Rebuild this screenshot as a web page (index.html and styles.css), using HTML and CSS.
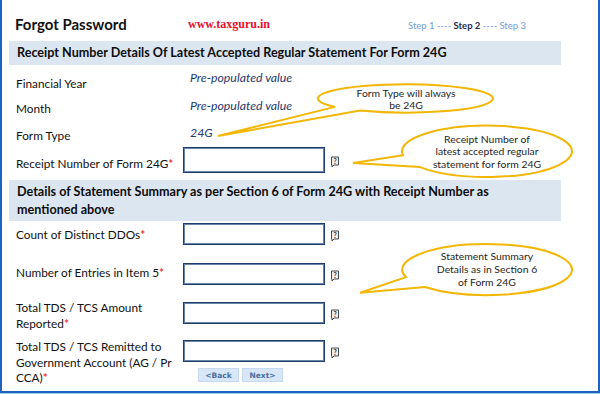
FILE: index.html
```html
<!DOCTYPE html>
<html lang="en">

<head>
    <meta charset="UTF-8">
    <meta name="viewport" content="width=device-width, initial-scale=1.0">
    <title>Forgot Password</title>
    <link rel="stylesheet" href="styles.css">
</head>

<body>

    <div class="page">
        <div class="top">
            <h1 class="title">Forgot Password</h1>
            <span class="site">www.taxguru.in</span>
            <div class="steps"><span>Step 1</span> ---- <b>Step 2</b> ---- <span>Step 3</span></div>
        </div>

        <div class="section">Receipt Number Details Of Latest Accepted Regular Statement For Form 24G</div>

        <div class="row row-fy">
            <div class="label">Financial Year</div>
            <div class="value">Pre-populated value</div>
        </div>
        <div class="row row-month">
            <div class="label">Month</div>
            <div class="value">Pre-populated value</div>
        </div>
        <div class="row row-type">
            <div class="label">Form Type</div>
            <div class="value">24G</div>
        </div>
        <div class="row row-receipt">
            <div class="label">Receipt Number of Form 24G<span class="req">*</span></div>
            <div class="control">
                <input class="field field-tall" type="text">
                <span class="help"><svg width="10" height="12" viewBox="0 0 10 12"><path d="M1.5 1h7v8h-4.5l-2 2v-2h-0.5z" fill="#eeeeee" stroke="#4a4a4a" stroke-width="1"/><text x="5" y="7.6" text-anchor="middle" font-size="7" font-weight="700" fill="#333">?</text></svg></span>
            </div>
        </div>

        <div class="section section-two">Details of Statement Summary as per Section 6 of Form 24G with Receipt Number as mentioned above</div>

        <div class="row row-count">
            <div class="label">Count of Distinct DDOs<span class="req">*</span></div>
            <div class="control">
                <input class="field" type="text">
                <span class="help"><svg width="10" height="12" viewBox="0 0 10 12"><path d="M1.5 1h7v8h-4.5l-2 2v-2h-0.5z" fill="#eeeeee" stroke="#4a4a4a" stroke-width="1"/><text x="5" y="7.6" text-anchor="middle" font-size="7" font-weight="700" fill="#333">?</text></svg></span>
            </div>
        </div>
        <div class="row row-entries">
            <div class="label">Number of Entries in Item 5<span class="req">*</span></div>
            <div class="control">
                <input class="field" type="text">
                <span class="help"><svg width="10" height="12" viewBox="0 0 10 12"><path d="M1.5 1h7v8h-4.5l-2 2v-2h-0.5z" fill="#eeeeee" stroke="#4a4a4a" stroke-width="1"/><text x="5" y="7.6" text-anchor="middle" font-size="7" font-weight="700" fill="#333">?</text></svg></span>
            </div>
        </div>
        <div class="row row-amount">
            <div class="label">Total TDS / TCS Amount<br>Reported<span class="req">*</span></div>
            <div class="control">
                <input class="field" type="text">
                <span class="help"><svg width="10" height="12" viewBox="0 0 10 12"><path d="M1.5 1h7v8h-4.5l-2 2v-2h-0.5z" fill="#eeeeee" stroke="#4a4a4a" stroke-width="1"/><text x="5" y="7.6" text-anchor="middle" font-size="7" font-weight="700" fill="#333">?</text></svg></span>
            </div>
        </div>
        <div class="row row-remitted">
            <div class="label">Total TDS / TCS Remitted to<br>Government Account (AG / Pr<br>CCA)<span class="req">*</span></div>
            <div>
                <div class="control">
                    <input class="field" type="text">
                    <span class="help"><svg width="10" height="12" viewBox="0 0 10 12"><path d="M1.5 1h7v8h-4.5l-2 2v-2h-0.5z" fill="#eeeeee" stroke="#4a4a4a" stroke-width="1"/><text x="5" y="7.6" text-anchor="middle" font-size="7" font-weight="700" fill="#333">?</text></svg></span>
                </div>
                <div class="nav">
                    <button class="btn" type="button">&lt;Back</button>
                    <button class="btn" type="button">Next&gt;</button>
                </div>
            </div>
        </div>
    </div>

    <!-- annotation bubbles drawn over the form -->
    <svg class="callouts" width="600" height="394" viewBox="0 0 600 394">
        <path d="M335 106.9 A87.5 14.2 0 1 1 360 110.6 L218 136 Z" />
        <text x="406" y="96.8">Form Type will always</text>
        <text x="406" y="109.2">be 24G</text>

        <path d="M403 155.2 A85 25.7 0 1 1 420 167.1 L353 163 Z" />
        <text x="487" y="142.5">Receipt Number of</text>
        <text x="487" y="155.2">latest accepted regular</text>
        <text x="487" y="167.8">statement for form 24G</text>

        <path d="M406 277.2 A85 25.5 0 1 1 425 287 L360 292.7 Z" />
        <text x="487" y="260.2">Statement Summary</text>
        <text x="487" y="272.8">Details as in Section 6</text>
        <text x="487" y="286.2">of Form 24G</text>
    </svg>

</body>

</html>
```

FILE: styles.css
```css
body {
    margin: 0;
    width: 600px;
    height: 394px;
    position: relative;
    overflow: hidden;
    background: white;
    font-family: Lato, 'Open Sans', sans-serif;
    color: #111;
}

.page {
    height: 393px;
    box-sizing: border-box;
    padding-left: 7px;
    border: 2px solid #1d63c1;
    border-top: none;
    box-shadow: 0 1px 0 #a9cbef;
}

.top {
    display: flex;
    align-items: center;
    height: 41px;
    box-sizing: border-box;
    padding-top: 7px;
}

.title {
    margin: 0 0 0 6px;
    width: 173px;
    font-size: 15px;
    font-weight: 700;
    color: #111;
}

.site {
    width: 220px;
    font-family: 'Liberation Serif', serif;
    font-weight: 700;
    font-size: 12px;
    color: #e8102c;
}

.steps {
    margin-top: 2px;
    font-size: 9.5px;
    color: #6f9ddc;
}

.steps b {
    color: #1d2b4f;
}

.section {
    width: 552px;
    box-sizing: border-box;
    padding-left: 8px;
    background: #dce6f1;
    font-size: 12.6px;
    font-weight: 700;
    line-height: 24px;
    color: #0d0d0d;
}

.section-two {
    padding-top: 3px;
    padding-bottom: 2px;
    padding-right: 60px;
    line-height: 18px;
}

.row {
    display: flex;
    padding-left: 7px;
    box-sizing: border-box;
}

.label {
    width: 167px;
    flex-shrink: 0;
    font-size: 11.8px;
    line-height: 15.5px;
}

.value {
    padding-left: 7px;
    font-size: 12.3px;
    font-style: italic;
    line-height: 16px;
    color: #1f3a70;
}

.req {
    color: #e8383d;
    font-weight: 700;
}

.control {
    display: flex;
    align-items: center;
}

.field {
    width: 142px;
    height: 22px;
    margin: 0;
    padding: 0;
    box-sizing: border-box;
    border: 1px solid #1e3d6b;
    box-shadow: inset 0 0 0 1px #6a84aa;
    background: white;
}

.field-tall {
    height: 26px;
}

.help {
    display: flex;
    margin: 4px 0 0 5px;
}

.nav {
    display: flex;
    gap: 3px;
    margin: 6px 0 0 15px;
}

.btn {
    width: 41px;
    height: 14px;
    padding: 0;
    border: 1px solid #c6d9ee;
    background: #d8e7f7;
    font-family: 'DejaVu Sans', sans-serif;
    font-size: 7.5px;
    font-weight: 700;
    color: #4a6f9e;
}

/* row spacing taken from the form layout */
.row-fy { height: 31px; }
.row-fy .label { padding-top: 11px; }
.row-fy .value { padding-top: 5px; }

.row-month { height: 26px; }
.row-month .label { padding-top: 5px; }
.row-month .value { padding-top: 2px; }

.row-type { height: 24px; }
.row-type .label { padding-top: 6px; }
.row-type .value { padding-top: 3px; }

.row-receipt { height: 34px; }
.row-receipt .label { padding-top: 10px; }
.row-receipt .control { margin-top: 1px; align-self: flex-start; }

.row-count { height: 37px; }
.row-count .label { padding-top: 6px; }
.row-count .control { margin-top: 2px; align-self: flex-start; }

.row-entries { height: 38px; }
.row-entries .label { padding-top: 7px; }
.row-entries .control { margin-top: 5px; align-self: flex-start; }

.row-amount { height: 38px; }
.row-amount .label { padding-top: 4px; }
.row-amount .control { margin-top: 6px; align-self: flex-start; }

.row-remitted .label { padding-top: 5px; }
.row-remitted .control { margin-top: 6px; }

.callouts {
    position: absolute;
    left: 0;
    top: 0;
}

.callouts path {
    fill: white;
    stroke: #f2b705;
    stroke-width: 2;
    stroke-linejoin: miter;
}

.callouts text {
    font-family: Lato, sans-serif;
    font-size: 10.4px;
    fill: #1e1e1e;
    text-anchor: middle;
}
```
